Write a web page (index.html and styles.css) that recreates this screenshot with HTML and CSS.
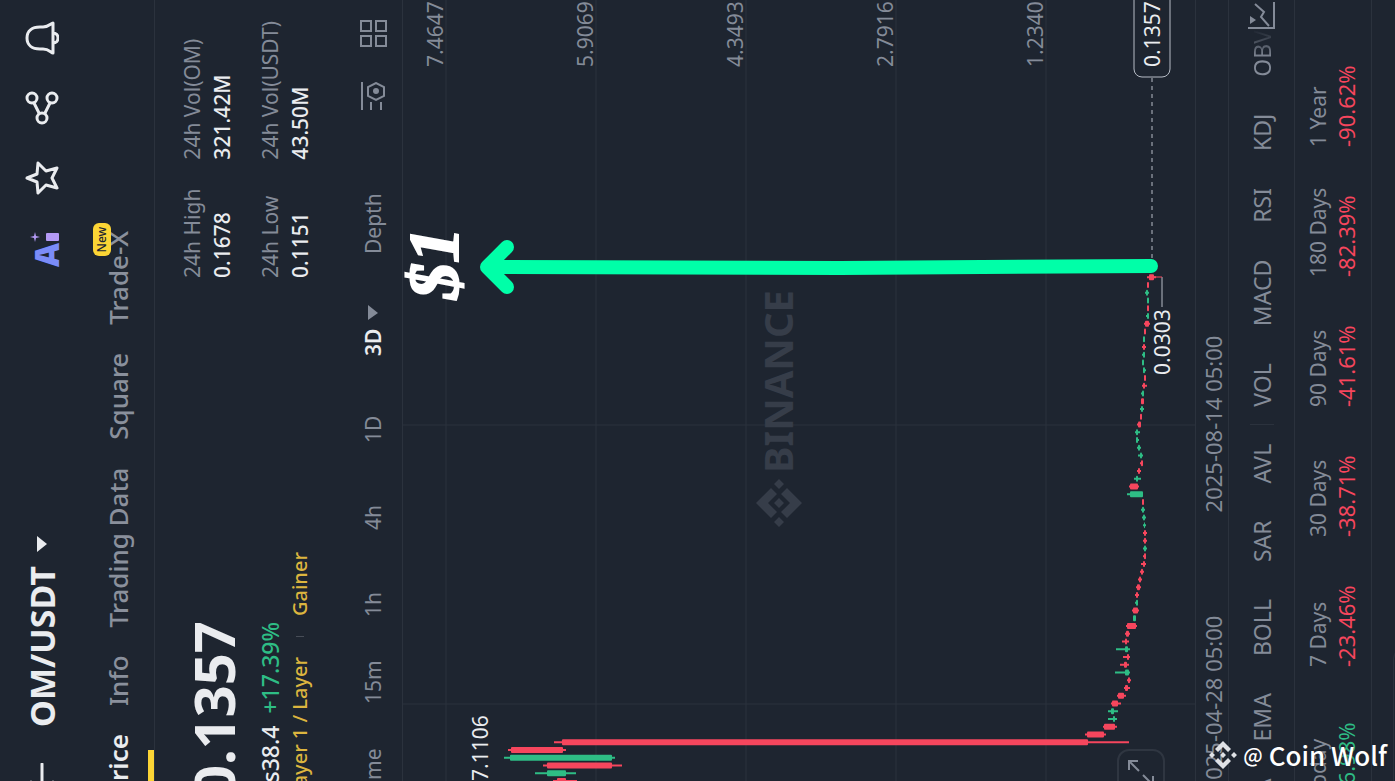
FILE: index.html
```
<!DOCTYPE html>
<html lang="en">
<head>
  <meta charset="UTF-8">
  <meta name="viewport" content="width=device-width, initial-scale=1.0">
  <title>OM/USDT</title>
  <link rel="stylesheet" href="styles.css">
</head>
<body>
  <div class="screen">
    <main class="app">

      <header class="header">
        <button class="icon-btn back" aria-label="Back">
          <svg width="34" height="34" viewBox="0 0 34 34"><path d="M33 17H4M15 6L4 17l11 11"/></svg>
        </button>
        <button class="pair">OM/USDT
          <svg width="18" height="12" viewBox="0 0 18 12"><path d="M1 1h16L9 11z"/></svg>
        </button>
        <div class="actions">
          <button class="icon-btn ai" aria-label="Ai">
            <svg width="36" height="36" viewBox="0 0 36 36">
              <text x="0" y="35">A</text>
              <rect x="26" y="22" width="8" height="13" rx="1"/>
              <path d="M30 6l1 4 4 1-4 1-1 4-1-4-4-1 4-1z"/>
            </svg>
          </button>
          <button class="icon-btn" aria-label="Favorite">
            <svg width="34" height="34" viewBox="0 0 34 34"><path d="M17 2l4 10 11 1-8 8 3 11-10-5-10 5 3-11-8-8 11-1z"/></svg>
          </button>
          <button class="icon-btn" aria-label="Share">
            <svg width="34" height="34" viewBox="0 0 34 34">
              <circle cx="7" cy="17" r="5"/><circle cx="27" cy="7" r="5"/><circle cx="27" cy="27" r="5"/>
              <path d="M12 14l10-5M12 20l10 5"/>
            </svg>
          </button>
          <button class="icon-btn" aria-label="Alerts">
            <svg width="34" height="34" viewBox="0 0 34 34">
              <path d="M2 28c0-2 4-4 4-10v-3C6 7 10 2 17 2s11 5 11 13v3c0 6 4 8 4 10zM12 28c0 3 2 5 5 5s5-2 5-5"/>
            </svg>
          </button>
        </div>
      </header>

      <nav class="tabs">
        <a class="active" href="#price">Price</a>
        <a href="#info">Info</a>
        <a href="#trading-data">Trading Data</a>
        <a href="#square">Square</a>
        <a href="#trade-x">Trade-X<span class="badge">New</span></a>
      </nav>

      <section class="summary">
        <div class="quote">
          <div class="price">0.1357</div>
          <div class="fiat">Rs38.4 <span class="up">+17.39%</span></div>
          <div class="tags"><a href="#layer">Layer 1 / Layer</a><i></i><a href="#gainer">Gainer</a></div>
        </div>
        <dl class="stats">
          <div><dt>24h High</dt><dd>0.1678</dd></div>
          <div><dt>24h Vol(OM)</dt><dd>321.42M</dd></div>
          <div><dt>24h Low</dt><dd>0.1151</dd></div>
          <div><dt>24h Vol(USDT)</dt><dd>43.50M</dd></div>
        </dl>
      </section>

      <div class="intervals">
        <button>Time</button>
        <button>15m</button>
        <button>1h</button>
        <button>4h</button>
        <button>1D</button>
        <button class="active">3D <svg width="15" height="10" viewBox="0 0 15 10"><path d="M0 0h15L7 10z"/></svg></button>
        <button>Depth</button>
        <div class="tools">
          <button aria-label="Chart settings">
            <svg width="28" height="28" viewBox="0 0 28 28">
              <path d="M0 3h28M0 12h8M0 22h8M14 9h9l4 8-4 8h-9l-4-8z"/><circle class="dot" cx="19" cy="17" r="3"/>
            </svg>
          </button>
          <button aria-label="Layout">
            <svg width="28" height="28" viewBox="0 0 28 28">
              <path d="M2 2h10v10H2zM17 2h10v10h-10zM2 17h10v10H2zM17 17h10v10h-10z"/>
            </svg>
          </button>
        </div>
      </div>

      <section class="chart">
        <svg class="plot" viewBox="-16 403 797 792">
          <path class="grid" d="M-16 446H781M-16 596H781M-16 746H781M-16 896H781M-16 1046H781M77 403V1195M356 403V1195"/>
          <g class="logo">
            <path d="M278 756l-15 15 6 6 9-9 9 9 6-6zM278 802l-15-15 6-6 9 9 9-9 6 6zM278 774l5 5-5 5-5-5zM259 774l5 5-5 5-5-5zM297 774l5 5-5 5-5-5z"/>
            <text x="308" y="793">BINANCE</text>
          </g>
          <g class="axis">
            <text x="714" y="443">7.4647</text>
            <text x="714" y="593">5.9069</text>
            <text x="714" y="743">4.3493</text>
            <text x="714" y="893">2.7916</text>
            <text x="714" y="1043">1.2340</text>
          </g>
          <g id="candles"></g>
          <path class="last-line" d="M515 1152H704"/>
          <rect class="last-box" x="704" y="1134" width="100" height="36" rx="8"/>
          <text class="mark" x="714" y="1160">0.1357</text>
          <text class="mark" x="0" y="488">7.1106</text>
          <path class="low-line" d="M474 1162H504"/>
          <path class="low-tick" d="M504 1162V1152"/>
          <text class="mark" x="406" y="1170">0.0303</text>
          <path class="arrow" d="M515 1151L513 840L514 487M494 507L514 487L534 507"/>
          <text class="target" x="482" y="458">$1</text>
        </svg>
        <button class="expand" aria-label="Full screen">
          <svg width="28" height="28" viewBox="0 0 28 28"><path d="M16 12l10-10M17 2h9v9M12 16l-10 10M11 26H2v-9"/></svg>
        </button>
      </section>

      <div class="dates"><time>2025-04-28 05:00</time><time>2025-08-14 05:00</time></div>

      <div class="indicators">
        <div class="strip">
          <button>MA</button>
          <button>EMA</button>
          <button>BOLL</button>
          <button>SAR</button>
          <button>AVL</button>
          <button class="sub">VOL</button>
          <button>MACD</button>
          <button>RSI</button>
          <button>KDJ</button>
          <button class="fade">OBV</button>
        </div>
        <button class="more" aria-label="Indicators">
          <svg width="28" height="28" viewBox="0 0 28 28">
            <path d="M2 0v26h26M4 21l9-8 5 3 8-9"/><path class="fill" d="M6 2h8l-4 6z"/>
          </svg>
        </button>
      </div>

      <dl class="returns">
        <div><dt>Today</dt><dd class="up">+6.98%</dd></div>
        <div><dt>7 Days</dt><dd>-23.46%</dd></div>
        <div><dt>30 Days</dt><dd>-38.71%</dd></div>
        <div><dt>90 Days</dt><dd>-41.61%</dd></div>
        <div><dt>180 Days</dt><dd>-82.39%</dd></div>
        <div><dt>1 Year</dt><dd>-90.62%</dd></div>
      </dl>
      <div class="sheet"></div>
    </main>
  </div>

  <div class="watermark">
    <svg width="28" height="28" viewBox="0 0 28 28">
      <path d="M14 0l8 8-3 3-5-5-5 5-3-3zM14 28l8-8-3-3-5 5-5-5-3 3zM14 11l3 3-3 3-3-3zM3 11l3 3-3 3-3-3zM25 11l3 3-3 3-3-3z"/>
    </svg>
    <span class="at">@</span><span>Coin Wolf</span>
  </div>

  <script src="chart.js"></script>
</body>
</html>
```
FILE: styles.css
```
* {
  box-sizing: border-box;
}

body {
  margin: 0;
  background-color: #1e2530;
  color: #eaecef;
  font-family: "Noto Sans", sans-serif;
  font-size: 21px;
  line-height: 30px;
  overflow: hidden;
}

button {
  padding: 0;
  border: 0;
  background: none;
  color: inherit;
  font: inherit;
  text-align: left;
}

a {
  color: inherit;
  text-decoration: none;
}

dl, dd {
  margin: 0;
}

svg {
  display: block;
  fill: none;
  stroke: currentColor;
}

/* portrait page turned on its side */
.screen {
  position: absolute;
  top: 0;
  left: 0;
  width: 100vh;
  height: 100vw;
  overflow: hidden;
  transform: translateY(100vh) rotate(-90deg);
  transform-origin: 0 0;
}

.app {
  margin-left: -16px;
  white-space: nowrap;
}

.header {
  display: flex;
  align-items: center;
  height: 83px;
  padding-right: 21px;
}

.icon-btn svg {
  stroke-width: 3;
  stroke-linejoin: round;
  stroke-linecap: round;
}

.pair {
  display: flex;
  align-items: center;
  gap: 13px;
  margin-left: 36px;
  font-size: 34px;
  font-weight: 700;
}

.pair svg {
  fill: currentColor;
  stroke: none;
}

.actions {
  display: flex;
  align-items: center;
  gap: 36px;
  margin-left: auto;
}

.ai svg {
  fill: #b49af5;
  stroke: none;
}

.ai text {
  fill: #7b8cf8;
  font-size: 33px;
  font-weight: 900;
}

.tabs {
  display: flex;
  gap: 28px;
  border-bottom: 1px solid #2b323d;
  color: #8a909c;
  font-size: 26px;
  line-height: 71px;
  font-weight: 500;
}

.tabs a {
  position: relative;
}

.tabs .active {
  color: #eaecef;
  font-weight: 600;
}

.tabs .active::after {
  content: "";
  position: absolute;
  left: 16px;
  right: 16px;
  bottom: 0;
  height: 6px;
  background-color: #fcd535;
}

.badge {
  position: absolute;
  top: 10px;
  right: -8px;
  padding: 0 4px;
  border-radius: 6px;
  background-color: #fcd535;
  color: #1e2530;
  font-size: 12px;
  line-height: 18px;
}

.summary {
  display: flex;
  justify-content: space-between;
  height: 188px;
  padding: 22px 21px 0 0;
}

.price {
  margin: 4px 0 10px;
  font-size: 56px;
  line-height: 64px;
  font-weight: 700;
}

.fiat {
  font-size: 23px;
  font-weight: 500;
}

.up {
  margin-left: 6px;
  color: #2ebd85;
}

.tags {
  display: flex;
  align-items: center;
  color: #dcb53f;
  font-size: 20px;
  font-weight: 500;
}

.tags i {
  width: 1px;
  height: 8px;
  margin: 0 20px;
  background-color: #474d57;
}

.stats {
  display: grid;
  grid-template-columns: auto auto;
  align-content: start;
  gap: 18px 29px;
}

.stats dt {
  color: #848b98;
}

.stats dd {
  font-weight: 500;
}

.intervals {
  display: grid;
  grid-template-columns: 93px 87px 87px 87px 87px 102px auto 1fr;
  align-items: center;
  height: 60px;
  padding-right: 20px;
  border-bottom: 1px solid #2b323d;
  color: #848b98;
}

.intervals .active {
  display: flex;
  align-items: center;
  gap: 9px;
  color: #eaecef;
  font-weight: 600;
}

.active svg {
  fill: #848b98;
  stroke: none;
}

.tools {
  display: flex;
  justify-content: flex-end;
  gap: 34px;
}

.tools svg {
  stroke-width: 2;
}

.tools .dot {
  fill: currentColor;
  stroke: none;
}

.chart {
  position: relative;
}

.plot {
  width: 100%;
}

.plot text {
  stroke: none;
}

.grid {
  stroke: #2b323d;
}

.logo {
  fill: #363d49;
  stroke: none;
  font-size: 40px;
  font-weight: 700;
}

.axis {
  fill: #848b98;
}

.mark {
  fill: #eaecef;
}

.red {
  fill: #f6465d;
}

.green {
  fill: #2ebd85;
}

#candles {
  stroke: none;
}

.low-line {
  stroke: #b7bdc6;
}

.low-tick {
  stroke: #f6465d;
}

.last-line {
  stroke: #b7bdc6;
  stroke-dasharray: 4 4;
}

.last-box {
  fill: #1e2530;
  stroke: #b7bdc6;
}

.arrow {
  stroke: #00ffa8;
  stroke-width: 14;
  stroke-linecap: round;
  stroke-linejoin: round;
}

.plot .target {
  fill: #fff;
  stroke: #fff;
  stroke-width: 2;
  font-family: "Liberation Serif", serif;
  font-size: 72px;
  font-style: italic;
  font-weight: 700;
}

.expand {
  position: absolute;
  left: 0;
  bottom: 30px;
  padding: 8px;
  border: 2px solid #2f3641;
  border-radius: 12px;
  background-color: #1e2530;
  color: #848b98;
}

.expand svg {
  stroke-width: 2;
}

.dates {
  display: grid;
  grid-template-columns: 280px 280px;
  margin-left: -47px;
  padding-top: 2px;
  border-top: 1px solid #2b323d;
  border-bottom: 1px solid #2b323d;
  color: #848b98;
  font-size: 22px;
  text-align: center;
}

.indicators {
  display: flex;
  align-items: center;
  height: 66px;
  border-bottom: 1px solid #2b323d;
  color: #848b98;
  font-size: 23px;
}

.strip {
  display: flex;
  flex: 1;
  gap: 37px;
  margin-left: -17px;
}

.sub {
  position: relative;
}

.sub::before {
  content: "";
  position: absolute;
  left: -18px;
  top: 3px;
  height: 24px;
  border-left: 1px solid #2b323d;
}

.fade {
  color: transparent;
  background: linear-gradient(to right, #848b98 40%, #1e2530);
  background-clip: text;
  -webkit-background-clip: text;
}

.more {
  padding-right: 4px;
}

.more svg {
  stroke-width: 2;
}

.more .fill {
  fill: currentColor;
  stroke: none;
}

.returns {
  display: grid;
  grid-template-columns: repeat(6, 130px);
  padding: 9px 0 11px;
  border-bottom: 1px solid #2b323d;
  color: #f6465d;
  font-size: 22px;
  line-height: 28px;
}

.returns dt {
  color: #848b98;
  font-size: 21px;
}

.returns .up {
  margin-left: 0;
}

.sheet {
  width: 150px;
  height: 40px;
  margin-top: 21px;
  border: 1px solid #2b323d;
  border-radius: 12px;
}

.watermark {
  position: absolute;
  right: 8px;
  bottom: 8px;
  display: flex;
  align-items: center;
  gap: 6px;
  color: #fff;
  font: 500 26px/36px "Noto Sans CJK SC", sans-serif;
  text-shadow: 0 1px 2px #1e2530;
}

.watermark svg {
  fill: #dfe1e5;
  stroke: none;
}

.at {
  font-size: 20px;
}
```
FILE: chart.js
```
// each row: colour, wick top, body top, body bottom, wick bottom
const candles = [
  ['red', 553, 557, 566, 577],
  ['green', 535, 547, 566, 576],
  ['red', 543, 547, 612, 622],
  ['green', 504, 510, 612, 615],
  ['red', 508, 511, 563, 566],
  ['red', 554, 562, 1088, 1129],
  ['red', 1085, 1087, 1104, 1106],
  ['red', 1103, 1104, 1115, 1117],
  ['green', 1108, 1113, 1115, 1117],
  ['green', 1108, 1111, 1114, 1118],
  ['red', 1111, 1112, 1118, 1121],
  ['red', 1117, 1118, 1124, 1126],
  ['red', 1124, 1125, 1128, 1130],
  ['red', 1127, 1128, 1130, 1131],
  ['green', 1115, 1125, 1129, 1130],
  ['red', 1120, 1124, 1127, 1129],
  ['red', 1123, 1127, 1129, 1130],
  ['green', 1116, 1125, 1128, 1130],
  ['red', 1122, 1125, 1127, 1129],
  ['red', 1125, 1126, 1129, 1130],
  ['red', 1126, 1127, 1136, 1137],
  ['green', 1133, 1133, 1136, 1136],
  ['red', 1132, 1133, 1138, 1139],
  ['green', 1135, 1136, 1138, 1138],
  ['red', 1135, 1136, 1138, 1139],
  ['red', 1136, 1137, 1140, 1141],
  ['red', 1138, 1139, 1141, 1142],
  ['red', 1140, 1141, 1143, 1144],
  ['red', 1141, 1143, 1145, 1146],
  ['red', 1143, 1144, 1146, 1146],
  ['green', 1143, 1144, 1146, 1147],
  ['red', 1143, 1144, 1146, 1147],
  ['red', 1143, 1144, 1146, 1147],
  ['green', 1143, 1144, 1145, 1146],
  ['green', 1142, 1143, 1145, 1146],
  ['green', 1141, 1142, 1144, 1145],
  ['red', 1142, 1142, 1144, 1144],
  ['green', 1127, 1130, 1143, 1143],
  ['red', 1129, 1130, 1138, 1139],
  ['green', 1134, 1136, 1138, 1141],
  ['red', 1137, 1138, 1140, 1141],
  ['red', 1140, 1141, 1143, 1143],
  ['green', 1138, 1140, 1142, 1143],
  ['green', 1137, 1138, 1140, 1141],
  ['green', 1136, 1136, 1138, 1139],
  ['green', 1135, 1136, 1138, 1140],
  ['red', 1137, 1138, 1141, 1141],
  ['red', 1140, 1140, 1142, 1142],
  ['green', 1140, 1141, 1143, 1144],
  ['red', 1141, 1141, 1144, 1144],
  ['green', 1141, 1142, 1144, 1144],
  ['red', 1142, 1143, 1145, 1147],
  ['red', 1144, 1144, 1146, 1146],
  ['green', 1143, 1143, 1145, 1146],
  ['green', 1142, 1142, 1144, 1144],
  ['green', 1142, 1143, 1145, 1145],
  ['red', 1142, 1143, 1145, 1146],
  ['green', 1143, 1143, 1145, 1145],
  ['red', 1144, 1144, 1146, 1146],
  ['red', 1144, 1145, 1149, 1150],
  ['green', 1146, 1147, 1149, 1149],
  ['red', 1147, 1147, 1149, 1149],
  ['green', 1147, 1147, 1149, 1149],
  ['green', 1145, 1146, 1148, 1149],
  ['red', 1147, 1147, 1149, 1149],
  ['red', 1147, 1149, 1154, 1156]
];

const step = 7.75;
const group = document.getElementById('candles');

function addRect(color, x, y, width, height) {
  const rect = document.createElementNS('http://www.w3.org/2000/svg', 'rect');
  rect.setAttribute('class', color);
  rect.setAttribute('x', x);
  rect.setAttribute('y', y);
  rect.setAttribute('width', width);
  rect.setAttribute('height', height);
  if (width > 2) rect.setAttribute('rx', 1);
  group.appendChild(rect);
}

candles.forEach(([color, high, top, bottom, low], i) => {
  const x = i * step;
  addRect(color, x - 1, high, 2, low - high);
  addRect(color, x - 3, top, 6, bottom - top);
});
```
